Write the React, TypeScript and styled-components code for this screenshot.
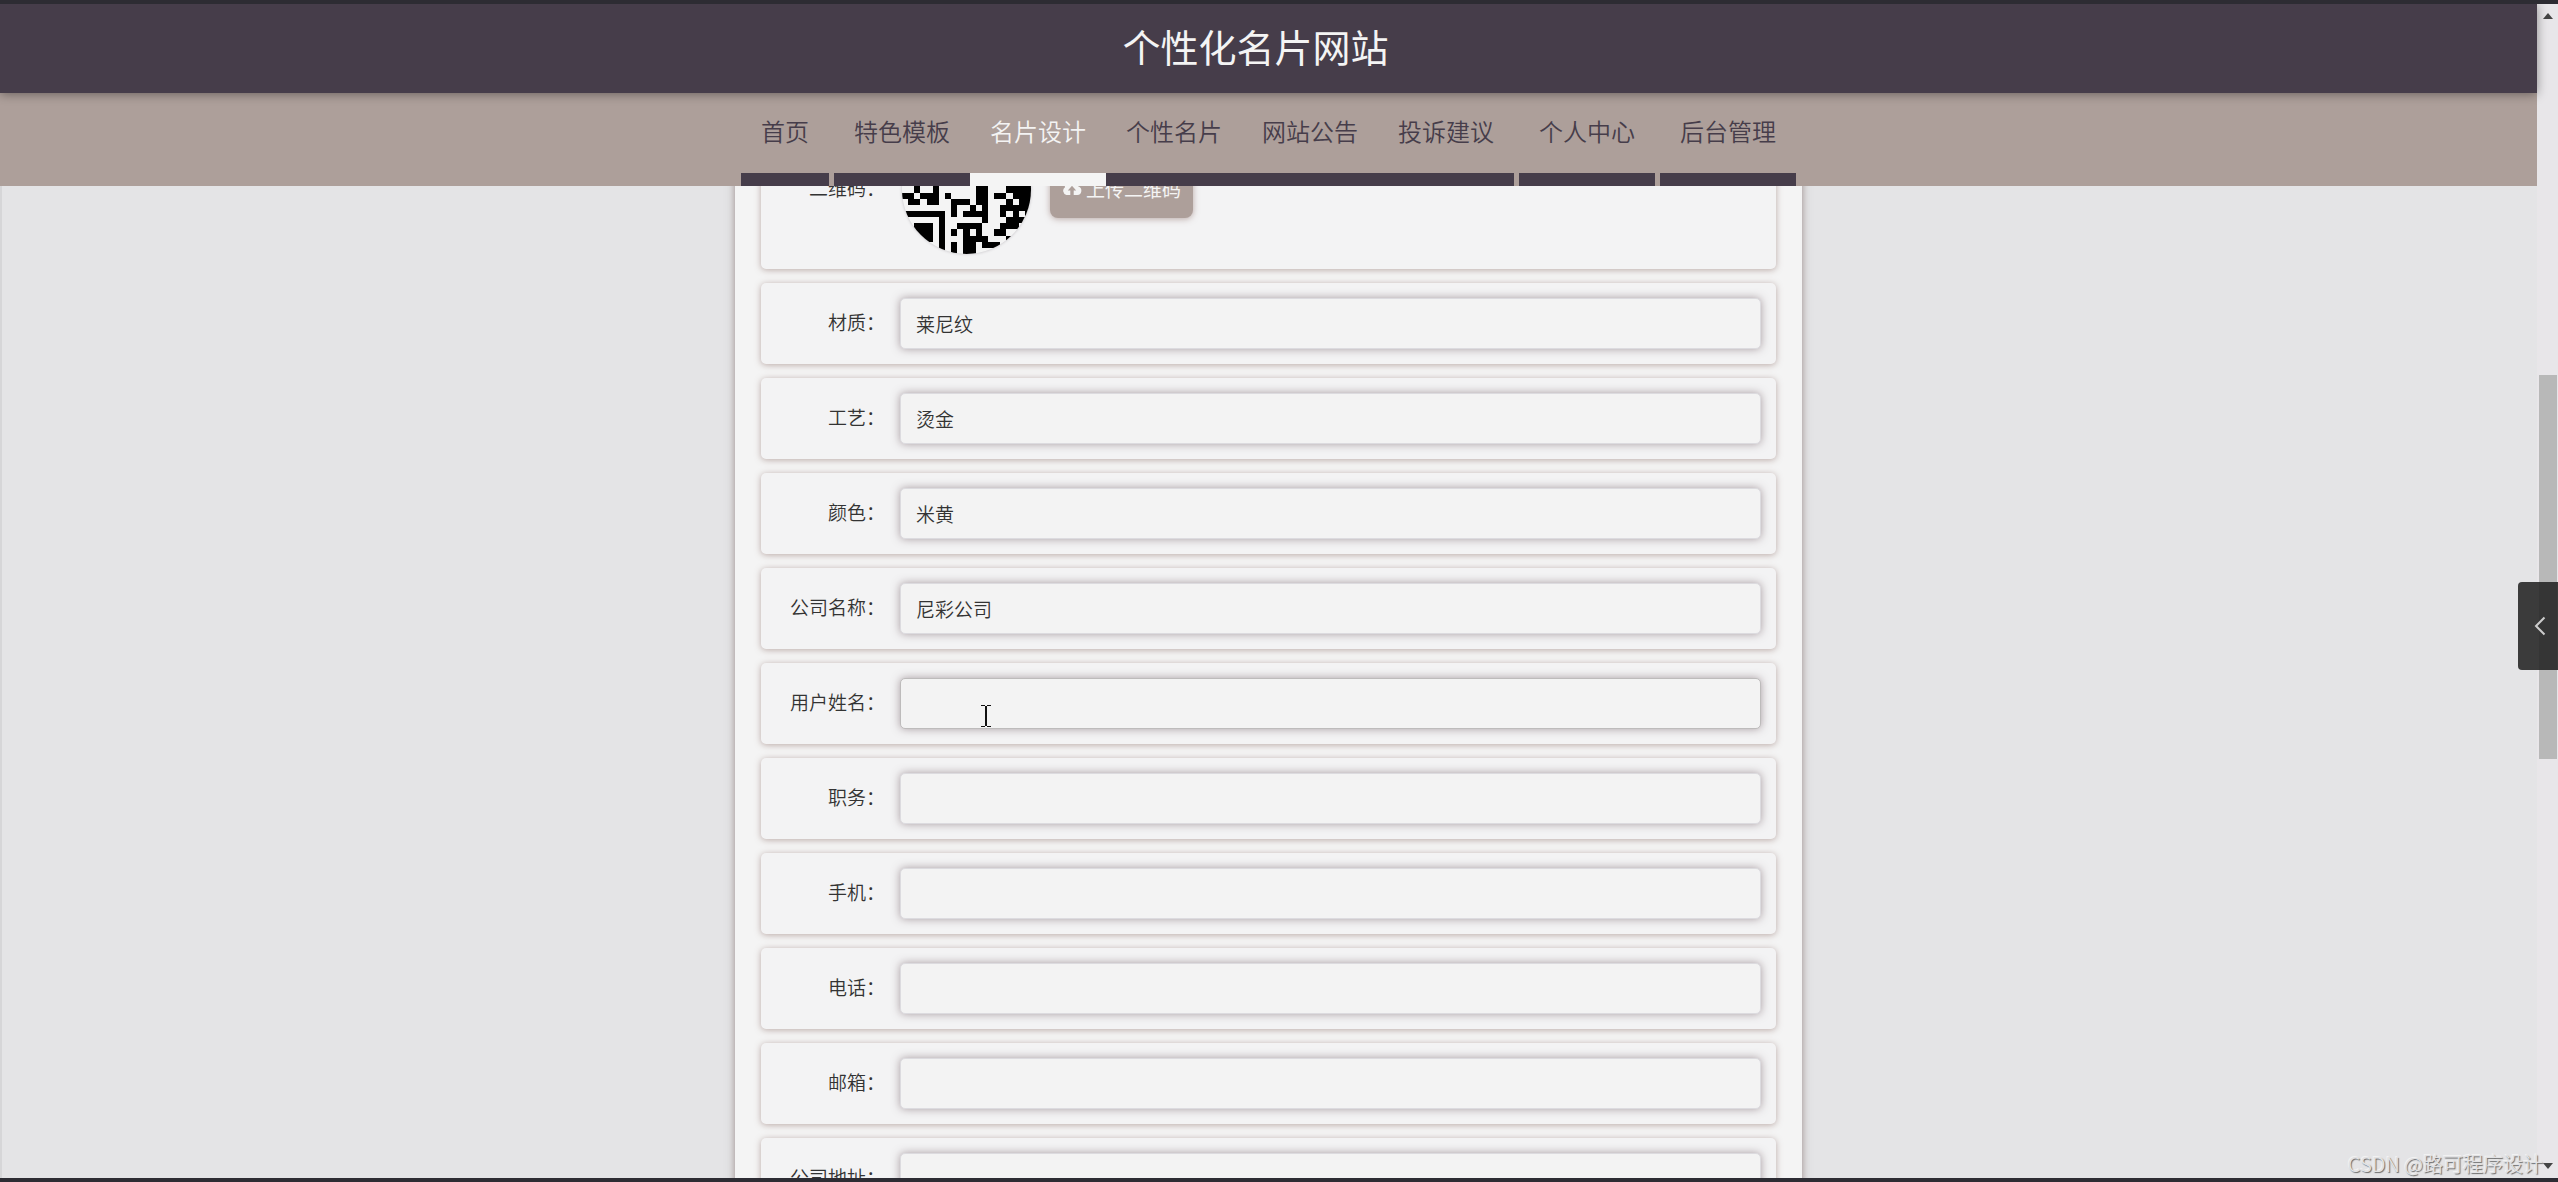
import React from "react";
import styled, { createGlobalStyle, css } from "styled-components";

const c = {
  plum: "#463d4a",
  taupe: "#ad9f9a",
  page: "#e4e4e6",
  panel: "#f4f4f4",
  frame: "#2d2c33",
};

const GlobalStyle = createGlobalStyle`
  *, *::before, *::after { box-sizing: border-box; }
  html, body { margin: 0; background: ${c.page}; overflow: hidden; }
  body, input, button {
    font-family: "Noto Sans CJK SC", "Noto Sans", sans-serif;
    font-size: 19px;
    color: #333;
  }
`;

const Frame = styled.div`
  position: relative;
  display: flex;
  height: 100vh;
  border-top: 4px solid ${c.frame};
  border-bottom: 4px solid ${c.frame};
  overflow: hidden;
`;

const Site = styled.div`
  flex: 1;
  min-width: 0;
  display: flex;
  flex-direction: column;
  box-shadow: inset 2px 0 0 #d6d6d8;
`;

const Header = styled.header`
  position: relative;
  z-index: 2;
  flex: none;
  padding: 16px 26px 21px 0;
  background: ${c.plum};
  box-shadow: 0 1px 10px rgba(0, 0, 0, 0.4);
`;

const Title = styled.h1`
  margin: 0;
  font-size: 38px;
  line-height: 52px;
  font-weight: 400;
  text-align: center;
  color: #f4f4f4;
`;

const Nav = styled.nav`
  position: relative;
  z-index: 1;
  flex: none;
  display: flex;
  justify-content: center;
  background: ${c.taupe};
`;

const NavLink = styled.a<{ $active?: boolean; $apart?: boolean }>`
  padding: 0 20px 4px;
  margin-left: ${(p) => (p.$apart ? "5px" : "0")};
  border-bottom: 13px solid ${(p) => (p.$active ? "#f4f4f4" : c.plum)};
  font-size: 24px;
  font-weight: 350;
  line-height: 76px;
  color: ${(p) => (p.$active ? "#f4f4f4" : c.plum)};
  text-decoration: none;
`;

const Main = styled.main`
  flex: 1;
  min-height: 0;
  display: flex;
  justify-content: center;
  overflow: hidden;
`;

/* The form is scrolled up, so that its first row starts behind the menu. */
const Form = styled.form`
  flex: none;
  align-self: flex-start;
  width: 1067px;
  max-width: 100%;
  display: flex;
  flex-direction: column;
  gap: 14px;
  margin-top: -102px;
  padding: 26px;
  background: ${c.panel};
  box-shadow: 0 0 8px rgba(120, 100, 95, 0.7);
`;

const Row = styled.div`
  display: flex;
  align-items: center;
  gap: 15px;
  padding: 15px;
  padding-left: 0;
  border-radius: 5px;
  background: #f3f3f4;
  box-shadow: 0 1px 6px rgba(130, 95, 90, 0.5);
`;

const labelStyle = css`
  flex: none;
  width: 124px;
  padding-bottom: 3px;
  text-align: right;
  line-height: 28px;
  font-weight: 350;
`;

const Label = styled.label`
  ${labelStyle}
`;

const Caption = styled.span`
  ${labelStyle}
`;

const Field = styled.input<{ $hover?: boolean }>`
  flex: 1;
  min-width: 0;
  height: 51px;
  padding: 0 15px;
  border: 1px solid ${(p) => (p.$hover ? "#bdbbbb" : "#dcdbdf")};
  border-radius: 5px;
  outline: none;
  background: #f3f3f3;
  font-weight: 350;
  box-shadow: 0 0 8px rgba(95, 72, 80, 0.5);
`;

const Code = styled.svg`
  flex: none;
  display: block;
  width: 129px;
  height: 129px;
  margin-left: 2px;
  border-radius: 50%;
  background: #f4f4f4;
  box-shadow: 0 0 3px rgba(70, 61, 74, 0.3);
`;

const Upload = styled.button`
  display: flex;
  align-items: center;
  gap: 4px;
  height: 57px;
  margin-left: 4px;
  padding: 0 12px 3px;
  border: 0;
  border-radius: 8px;
  background: ${c.taupe};
  color: #f4f4f4;
  box-shadow: 0 1px 6px rgba(130, 95, 90, 0.5);
`;

const Track = styled.div`
  flex: none;
  width: 21px;
  display: flex;
  flex-direction: column;
  align-items: center;
  padding: 9px 0 9px 1px;
  background: #e8e6e9;
`;

const Thumb = styled.div`
  width: 18px;
  height: 384px;
  margin: 356px 0 auto;
  background: #b8b8b8;
`;

const Drawer = styled.button`
  position: absolute;
  z-index: 4;
  right: 0;
  top: 578px;
  display: flex;
  align-items: center;
  justify-content: center;
  width: 40px;
  height: 88px;
  padding: 0 0 0 4px;
  border: 0;
  border-radius: 4px 0 0 4px;
  background: rgba(33, 33, 33, 0.87);
`;

const Watermark = styled.div`
  position: absolute;
  z-index: 3;
  right: 15px;
  bottom: 0;
  font-size: 20px;
  font-weight: 350;
  line-height: 28px;
  color: #e2e2e4;
  text-shadow: 1px 1px 1px #6a6a6a, -1px -1px 0 #f2f2f2;
`;

const Cursor = styled.svg`
  position: absolute;
  z-index: 3;
  left: 981px;
  top: 701px;
`;

const menu = [
  { text: "首页" },
  { text: "特色模板", apart: true },
  { text: "名片设计", active: true },
  { text: "个性名片" },
  { text: "网站公告" },
  { text: "投诉建议" },
  { text: "个人中心", apart: true },
  { text: "后台管理", apart: true },
];

const fields = [
  { id: "material", label: "材质", value: "莱尼纹" },
  { id: "craft", label: "工艺", value: "烫金" },
  { id: "color", label: "颜色", value: "米黄" },
  { id: "company", label: "公司名称", value: "尼彩公司" },
  { id: "name", label: "用户姓名", value: "", hover: true },
  { id: "job", label: "职务", value: "" },
  { id: "mobile", label: "手机", value: "" },
  { id: "phone", label: "电话", value: "" },
  { id: "mail", label: "邮箱", value: "" },
  { id: "address", label: "公司地址", value: "" },
];

const modules = [
  "#######..#.#..#######",
  "#.....#.#..##.#.....#",
  "#.###.#..##.#.#.###.#",
  "#.###.#.#.#...#.###.#",
  "#.###.#...##..#.###.#",
  "#.....#.##.#..#.....#",
  "#######.#.#.#.#######",
  "........##.#.........",
  "#.#.###..##.#..#.##.#",
  ".##..#.##..#.###..#.#",
  "..#..#......##...####",
  "##.###.#....##.##.###",
  ".##.##..###.##...#.##",
  "........#..#.#..#####",
  "#######.#.####..#.#.#",
  "#.....#......#...###.",
  "#.###.#..####...###..",
  "#.###.#.#.#.#..##....",
  "#.###.#...####...#...",
  "#.....#.#.##.###.....",
  "#######.#.##.........",
];

const codePath = modules
  .flatMap((line, y) => [...line].map((m, x) => (m === "#" ? `M${x} ${y}h1v1h-1z` : "")))
  .join("");

export default function App() {
  return (
    <>
      <GlobalStyle />
      <Frame>
        <Site>
          <Header>
            <Title>个性化名片网站</Title>
          </Header>
          <Nav>
            {menu.map((m) => (
              <NavLink key={m.text} href="#" $active={m.active} $apart={m.apart}>
                {m.text}
              </NavLink>
            ))}
          </Nav>
          <Main>
            <Form>
              <Row>
                <Caption>二维码：</Caption>
                <Code viewBox="0 0 21 21" role="img" aria-label="二维码" shapeRendering="crispEdges">
                  <path d={codePath} />
                </Code>
                <Upload type="button">
                  <svg width="20" height="20" viewBox="0 0 20 20" aria-hidden="true">
                    <path
                      fill="currentColor"
                      d="M16.3 8.600A5 5 0 0 0 7 5.600 3 3 0 0 0 3 9.200 4.400 4.400 0 0 0 4.400 17H8.300V12.600H5.800L10 7.800l4.200 4.800h-2.500V17h3.700a4.300 4.300 0 0 0 .9-8.400z"
                    />
                  </svg>
                  上传二维码
                </Upload>
              </Row>
              {fields.map((f) => (
                <Row key={f.id}>
                  <Label htmlFor={f.id}>{f.label}：</Label>
                  <Field id={f.id} type="text" defaultValue={f.value} $hover={f.hover} />
                </Row>
              ))}
            </Form>
          </Main>
        </Site>
        <Track>
          <svg width="10" height="6" viewBox="0 0 10 6" aria-hidden="true">
            <path d="M5 0l5 6H0z" fill="#444" />
          </svg>
          <Thumb />
          <svg width="10" height="6" viewBox="0 0 10 6" aria-hidden="true">
            <path d="M5 6l5-6H0z" fill="#444" />
          </svg>
        </Track>
        <Drawer type="button" aria-label="展开">
          <svg width="12" height="20" viewBox="0 0 12 20" fill="none" stroke="#ccc" strokeWidth="2" aria-hidden="true">
            <path d="M10.500 1.500L2 10l8.500 8.500" />
          </svg>
        </Drawer>
        <Watermark>CSDN @路可程序设计</Watermark>
        <Cursor width="10" height="22" viewBox="0 0 10 22" aria-hidden="true">
          <path d="M0 0h4v1h2V0h4v1H6v20h4v1H6v-1H4v1H0v-1h4V1H0z" fill="#111" />
        </Cursor>
      </Frame>
    </>
  );
}
